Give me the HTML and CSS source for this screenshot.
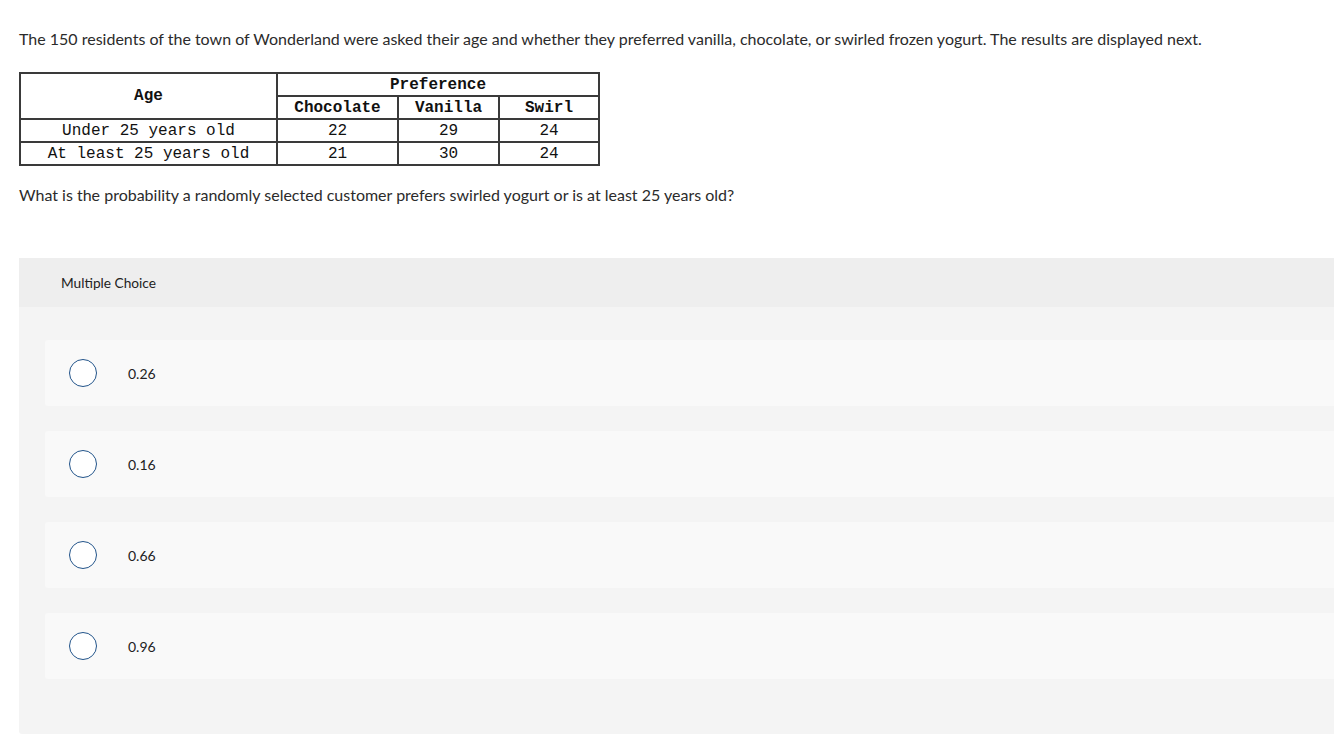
FILE: index.html
```html
<!DOCTYPE html>
<html>
<head>
<meta charset="utf-8">
<link rel="stylesheet" href="styles.css">
</head>
<body>
<div class="page">
  <p class="intro">The 150 residents of the town of Wonderland were asked their age and whether they preferred vanilla, chocolate, or swirled frozen yogurt. The results are displayed next.</p>
  <table class="data">
    <colgroup>
      <col class="c-age"><col class="c-choc"><col class="c-van"><col class="c-swirl">
    </colgroup>
    <tr><th rowspan="2">Age</th><th colspan="3">Preference</th></tr>
    <tr><th>Chocolate</th><th>Vanilla</th><th>Swirl</th></tr>
    <tr><td>Under 25 years old</td><td>22</td><td>29</td><td>24</td></tr>
    <tr><td>At least 25 years old</td><td>21</td><td>30</td><td>24</td></tr>
  </table>
  <p class="question">What is the probability a randomly selected customer prefers swirled yogurt or is at least 25 years old?</p>
  <div class="mc">
    <div class="mc-head">Multiple Choice</div>
    <div class="mc-body">
      <label class="opt"><span class="radio"></span><span class="opt-text">0.26</span></label>
      <label class="opt"><span class="radio"></span><span class="opt-text">0.16</span></label>
      <label class="opt"><span class="radio"></span><span class="opt-text">0.66</span></label>
      <label class="opt"><span class="radio"></span><span class="opt-text">0.96</span></label>
    </div>
  </div>
</div>
</body>
</html>
```
FILE: styles.css
```css
html, body {
  margin: 0;
  padding: 0;
  background: #fff;
}
body {
  font-family: "Lato", "Open Sans", sans-serif;
  color: #2b2b2b;
  overflow: hidden;
}
.page {
  padding: 29px 0 0 19px;
}
.intro, .question {
  margin: 0;
  line-height: 20px;
  font-size: 16px;
}
.data {
  margin-top: 23px;
  border-collapse: collapse;
  font-family: "Liberation Mono", monospace;
  font-size: 16px;
  color: #111;
  border: 2px solid #3a3a3a;
}
.c-age { width: 257px; }
.c-choc { width: 121px; }
.c-van { width: 101px; }
.c-swirl { width: 100px; }
.data th, .data td {
  border: 2px solid #3a3a3a;
  padding: 0;
  height: 21px;
  line-height: 20px;
  text-align: center;
  font-weight: normal;
}
.data th { font-weight: bold; }
.question {
  margin-top: 19px;
}
.mc {
  margin-top: 53px;
  background: #f4f4f4;
  border-radius: 3px 0 0 3px;
}
.mc-head {
  background: #eeeeee;
  height: 49px;
  padding-left: 42px;
  display: flex;
  align-items: center;
  font-size: 13.7px;
  color: #222;
}
.mc-body {
  padding: 33px 0 55px 26px;
  display: flex;
  flex-direction: column;
  gap: 25px;
}
.opt {
  height: 66px;
  background: #f9f9f9;
  border-radius: 3px 0 0 3px;
  display: flex;
  align-items: center;
  padding-left: 24px;
}
.radio {
  width: 26px;
  height: 26px;
  border: 1.5px solid #22548a;
  border-radius: 50%;
  background: #fff;
  flex: none;
}
.opt-text {
  margin-left: 31px;
  font-size: 14px;
  color: #222;
}
```
